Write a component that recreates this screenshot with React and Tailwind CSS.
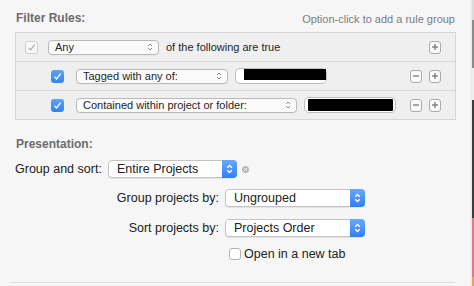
import React from "react";

const font = { fontFamily: '"Liberation Sans", Arial, sans-serif' };

function SmallChevrons() {
  return (
    <svg width="6" height="10" viewBox="0 0 6 10" className="shrink-0">
      <path d="M1 4 L3 2 L5 4" fill="none" stroke="#8c8c8c" strokeWidth="1" />
      <path d="M1 6 L3 8 L5 6" fill="none" stroke="#8c8c8c" strokeWidth="1" />
    </svg>
  );
}

function WhiteChevrons() {
  return (
    <svg width="7" height="12" viewBox="0 0 7 12">
      <path d="M1.2 4.8 L3.5 2.5 L5.8 4.8" fill="none" stroke="#fff" strokeWidth="1.4" />
      <path d="M1.2 7.2 L3.5 9.5 L5.8 7.2" fill="none" stroke="#fff" strokeWidth="1.4" />
    </svg>
  );
}

function SmallPopup({ w, label }) {
  return (
    <div
      className={`${w} h-[15px] rounded-[4px] border border-[#b9b9b9] bg-[#fbfbfb] flex items-center pl-[6px] pr-[5px] shrink-0 shadow-[0_0.5px_0_rgba(0,0,0,0.05)]`}
    >
      <span className="text-[11px] leading-[13px] text-[#262626] flex-1 truncate">{label}</span>
      <SmallChevrons />
    </div>
  );
}

function BluePopup({ w, label }) {
  return (
    <div
      className={`${w} h-[18px] rounded-[4px] border border-[#c4c4c4] bg-white flex items-stretch shrink-0 shadow-[0_1px_1px_rgba(0,0,0,0.08)]`}
    >
      <span className="flex-1 pl-[8px] text-[12.5px] leading-[16px] text-[#222] truncate">{label}</span>
      <div className="w-[15px] -my-px -mr-px rounded-r-[4px] bg-gradient-to-b from-[#69a9fa] to-[#2f7ef2] flex items-center justify-center">
        <WhiteChevrons />
      </div>
    </div>
  );
}

function BlueCheck() {
  return (
    <div className="w-[13px] h-[13px] rounded-[3px] bg-gradient-to-b from-[#5ea3f9] to-[#3383f2] flex items-center justify-center shrink-0">
      <svg width="9" height="9" viewBox="0 0 9 9">
        <path d="M1.5 4.8 L3.6 6.9 L7.6 1.6" fill="none" stroke="#fff" strokeWidth="1.3" />
      </svg>
    </div>
  );
}

function GreyCheck() {
  return (
    <div className="w-[13px] h-[13px] rounded-[3px] border border-[#cfcfcf] bg-[#fafafa] flex items-center justify-center shrink-0">
      <svg width="9" height="9" viewBox="0 0 9 9">
        <path d="M1.5 4.8 L3.6 6.9 L7.6 1.6" fill="none" stroke="#a9a9a9" strokeWidth="1.1" />
      </svg>
    </div>
  );
}

function PMButton({ kind }) {
  return (
    <div className="w-[12px] h-[13px] rounded-[3px] border border-[#ababab] bg-[#fafafa] flex items-center justify-center shrink-0">
      <svg width="8" height="8" viewBox="0 0 8 8">
        <path d="M1 4 H7" stroke="#6e6e6e" strokeWidth="1.2" />
        {kind === "plus" && <path d="M4 1 V7" stroke="#6e6e6e" strokeWidth="1.2" />}
      </svg>
    </div>
  );
}

function Field({ w, black }) {
  return (
    <div className={`${w} h-[16px] rounded-[5px] border border-[#bdbdbd] bg-white flex items-start shrink-0 relative`}>
      {black}
    </div>
  );
}

export default function App() {
  return (
    <div className="w-[474px] h-[286px] bg-[#f6f6f6] flex overflow-hidden" style={font}>
      <div className="flex-1 flex flex-col pl-[15px]">
        {/* header */}
        <div className="h-[32px] pt-[11px] flex items-start justify-between pr-[15px]">
          <span className="text-[12px] leading-[14px] font-bold text-[#6c6c6c] pl-px">Filter Rules:</span>
          <span className="text-[11px] leading-[14px] text-[#7c7c7c] pt-px">Option-click to add a rule group</span>
        </div>

        {/* rules table */}
        <div className="w-[441px] border border-[#d6d6d6] bg-[#efefef] flex flex-col">
          <div className="h-[28px] flex items-center pl-[9px] pr-[14px]">
            <GreyCheck />
            <div className="ml-[10px]">
              <SmallPopup w="w-[111px]" label="Any" />
            </div>
            <span className="ml-[7px] text-[11px] text-[#262626]">of the following are true</span>
            <div className="ml-auto">
              <PMButton kind="plus" />
            </div>
          </div>
          <div className="h-[29px] border-t border-[#d9d9d9] flex items-center pl-[35px] pr-[14px]">
            <BlueCheck />
            <div className="ml-[12px]">
              <SmallPopup w="w-[152px]" label="Tagged with any of:" />
            </div>
            <div className="ml-[7px]">
              <Field
                w="w-[92px]"
                black={<div className="ml-[8px] mt-0 w-[83px] h-[11px] bg-black" />}
              />
            </div>
            <div className="ml-auto flex gap-[7px]">
              <PMButton kind="minus" />
              <PMButton kind="plus" />
            </div>
          </div>
          <div className="h-[29px] border-t border-[#d9d9d9] flex items-center pl-[35px] pr-[14px]">
            <BlueCheck />
            <div className="ml-[12px]">
              <SmallPopup w="w-[221px]" label="Contained within project or folder:" />
            </div>
            <div className="ml-[7px]">
              <Field
                w="w-[92px]"
                black={<div className="ml-[3px] mt-px w-[85px] h-[12px] bg-black rounded-[1px]" />}
              />
            </div>
            <div className="ml-auto flex gap-[7px]">
              <PMButton kind="minus" />
              <PMButton kind="plus" />
            </div>
          </div>
        </div>

        {/* presentation */}
        <div className="mt-[17px] text-[12px] leading-[14px] font-bold text-[#6c6c6c] pl-px">Presentation:</div>

        <div className="mt-[9px] flex items-center h-[18px]">
          <span className="w-[93px] text-[12.5px] text-[#222]">Group and sort:</span>
          <BluePopup w="w-[129px]" label="Entire Projects" />
          <div className="ml-[5px] w-[7px] h-[7px] rounded-full bg-[#b9b9b9] flex items-center justify-center">
            <svg width="5" height="5" viewBox="0 0 5 5">
              <path d="M1 1 L4 4 M4 1 L1 4" stroke="#f6f6f6" strokeWidth="0.9" />
            </svg>
          </div>
        </div>

        <div className="mt-[11px] flex items-center h-[18px]">
          <span className="w-[204px] text-right text-[12.5px] text-[#222]">Group projects by:</span>
          <div className="ml-[6px]">
            <BluePopup w="w-[140px]" label="Ungrouped" />
          </div>
        </div>

        <div className="mt-[12px] flex items-center h-[18px]">
          <span className="w-[204px] text-right text-[12.5px] text-[#222]">Sort projects by:</span>
          <div className="ml-[6px]">
            <BluePopup w="w-[140px]" label="Projects Order" />
          </div>
        </div>

        <div className="mt-[10px] flex items-center h-[14px]">
          <div className="ml-[214px] w-[12px] h-[12px] rounded-[3px] border border-[#b3b3b3] bg-white shrink-0" />
          <span className="ml-[3px] text-[12.5px] text-[#222]">Open in a new tab</span>
        </div>

        <div className="mt-auto mb-[3px] -ml-[5px] w-[445px] h-px bg-[#dedede]" />
      </div>

      <div className="w-[2px] bg-[#ececec]" />
      <div className="w-[2px] flex flex-col">
        <div className="h-[20px] bg-[#dcdcdc]" />
        <div className="h-[48px] bg-[#8a8a8a]" />
        <div className="h-[32px] bg-[#ededed]" />
        <div className="h-[118px] bg-[#3c3c3c]" />
        <div className="h-[59px] bg-[#e2788a]" />
        <div className="flex-1 bg-[#e9a25e]" />
      </div>
    </div>
  );
}
